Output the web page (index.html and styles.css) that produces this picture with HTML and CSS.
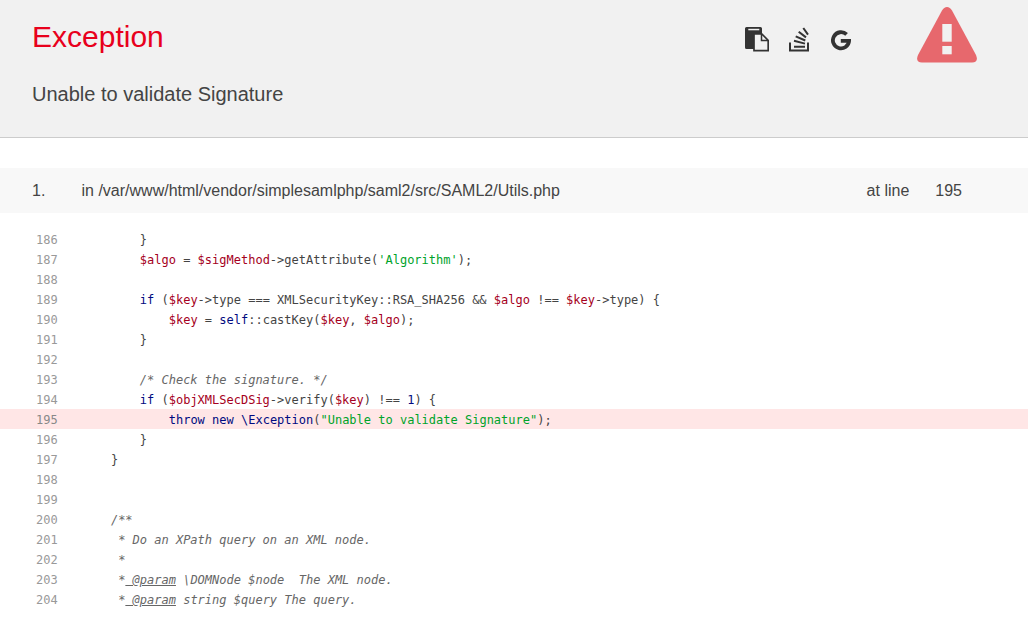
FILE: index.html
```html
<!DOCTYPE html>
<html lang="en">
<head>
<meta charset="utf-8">
<title>Exception</title>
<link rel="stylesheet" href="styles.css">
</head>
<body>
<header class="hero">
  <div class="hero-text">
    <h1 class="title">Exception</h1>
    <p class="message">Unable to validate Signature</p>
  </div>
  <div class="links">
    <svg class="icon" width="24" height="25" viewBox="0 0 24 25"><path fill="#333" d="M0 1.500Q0 0 1.500 0H15.500Q17 0 17 1.500V7H9V22H1.500Q0 22 0 20.500Z"/><rect x="3.300" y="1.800" width="11" height="1.500" fill="#f1f1f1"/><path fill="#f1f1f1" stroke="#333" stroke-width="1.700" d="M9 6.800H16.700L23.200 13.300V23.700H9Z"/><path fill="none" stroke="#333" stroke-width="1.500" d="M16.500 7V13.600H23"/></svg>
    <svg class="icon" width="20" height="25" viewBox="0 0 20 25"><path fill="none" stroke="#333" stroke-width="2" d="M1 15.500V23.500H19V15.500"/><path fill="none" stroke="#333" stroke-width="2" d="M5 19.800H16M5 13.800L16 16.600M6.700 9.400L16.300 13.500M9.700 4.700L17 10.400M14.300 1L19 7.600"/></svg>
    <svg class="icon google" width="20" height="25" viewBox="0 0 20 25"><path fill="none" stroke="#333" stroke-width="3.800" d="M15.600 7.400A8.100 8.100 0 1 0 18.100 13.900H9.800"/></svg>
  </div>
  <svg class="warn" width="62" height="58" viewBox="0 0 62 58"><path fill="#e7686d" d="M31 1Q34 1 36 4.500L60 49Q63 56.500 56 56.500H6Q-1 56.500 2 49L26 4.500Q28 1 31 1Z"/><rect x="26.300" y="18" width="9.400" height="17.700" fill="#f1f1f1"/><rect x="26.300" y="40" width="9.400" height="8.300" fill="#f1f1f1"/></svg>
</header>

<section class="trace">
  <div class="trace-head">
    <span class="trace-num">1.</span>
    <span class="trace-file">in /var/www/html/vendor/simplesamlphp/saml2/src/SAML2/Utils.php</span>
    <span class="trace-at">at line</span>
    <span class="trace-line">195</span>
  </div>
  <pre class="code"><code class="row"><span class="no">186</span><span class="src">        }</span></code>
<code class="row"><span class="no">187</span><span class="src">        <i class="var">$algo</i> = <i class="var">$sigMethod</i>-&gt;getAttribute(<i class="str">'Algorithm'</i>);</span></code>
<code class="row"><span class="no">188</span><span class="src"> </span></code>
<code class="row"><span class="no">189</span><span class="src">        <i class="kw">if</i> (<i class="var">$key</i>-&gt;type === XMLSecurityKey::RSA_SHA256 &amp;&amp; <i class="var">$algo</i> !== <i class="var">$key</i>-&gt;type) {</span></code>
<code class="row"><span class="no">190</span><span class="src">            <i class="var">$key</i> = <i class="kw">self</i>::castKey(<i class="var">$key</i>, <i class="var">$algo</i>);</span></code>
<code class="row"><span class="no">191</span><span class="src">        }</span></code>
<code class="row"><span class="no">192</span><span class="src"> </span></code>
<code class="row"><span class="no">193</span><span class="src">        <i class="cm">/* Check the signature. */</i></span></code>
<code class="row"><span class="no">194</span><span class="src">        <i class="kw">if</i> (<i class="var">$objXMLSecDSig</i>-&gt;verify(<i class="var">$key</i>) !== <i class="kw">1</i>) {</span></code>
<code class="row hot"><span class="no">195</span><span class="src">            <i class="kw">throw</i> <i class="kw">new</i> <i class="kw">\Exception</i>(<i class="str">"Unable to validate Signature"</i>);</span></code>
<code class="row"><span class="no">196</span><span class="src">        }</span></code>
<code class="row"><span class="no">197</span><span class="src">    }</span></code>
<code class="row"><span class="no">198</span><span class="src"> </span></code>
<code class="row"><span class="no">199</span><span class="src"> </span></code>
<code class="row"><span class="no">200</span><span class="src">    <i class="cm">/**</i></span></code>
<code class="row"><span class="no">201</span><span class="src">     <i class="cm">* Do an XPath query on an XML node.</i></span></code>
<code class="row"><span class="no">202</span><span class="src">     <i class="cm">*</i></span></code>
<code class="row"><span class="no">203</span><span class="src">     <i class="cm">*<u> @param</u> \DOMNode $node  The XML node.</i></span></code>
<code class="row"><span class="no">204</span><span class="src">     <i class="cm">*<u> @param</u> string $query The query.</i></span></code></pre>
</section>
</body>
</html>
```
FILE: styles.css
```css
* { box-sizing: border-box; }
html, body { margin: 0; padding: 0; background: #fff; overflow: hidden; }
body { font-family: "Liberation Sans", Arial, sans-serif; color: #333; height: 620px; }

.hero {
  display: flex;
  height: 138px;
  background: #f1f1f1;
  border-bottom: 1px solid #ccc;
  padding: 0 50px 0 32px;
}
.hero-text { flex: 1; }
.title {
  margin: 0;
  padding-top: 19px;
  font-size: 30px;
  line-height: 36px;
  font-weight: 400;
  color: #e8001c;
}
.message {
  margin: 0;
  padding-top: 28px;
  font-size: 20px;
  line-height: 23px;
  color: #444;
}
.links {
  display: flex;
  gap: 20px;
  padding-top: 27px;
  margin-right: 65px;
  height: 60px;
}
.google { margin-left: 2px; }
.warn { margin-top: 6px; }

.trace { margin-top: 30px; }
.trace-head {
  display: flex;
  align-items: center;
  height: 45px;
  padding: 0 66px 0 32px;
  background: #f8f8f8;
  font-size: 16px;
  color: #444;
}
.trace-num { width: 49.500px; }
.trace-file { flex: 1; }
.trace-at { margin-right: 26px; }

.code {
  margin: 16px 0 0;
  font-family: "DejaVu Sans Mono", monospace;
  font-size: 12px;
  line-height: 20px;
  color: #444;
  display: flex;
  flex-direction: column;
  white-space: pre;
}
.row { display: flex; height: 20px; font-family: inherit; font-size: 12px; line-height: 22px; }
.no { width: 82px; padding-left: 36px; color: #999; }
.src { flex: 1; }
.hot { background: #ffe6e6; }
.hot .no { color: #888; }
.src i { font-style: normal; }
.src .var { color: #a50021; }
.src .kw { color: #000a80; }
.src .str { color: #00a32a; }
.src .cm { color: #666; font-style: italic; }
```
